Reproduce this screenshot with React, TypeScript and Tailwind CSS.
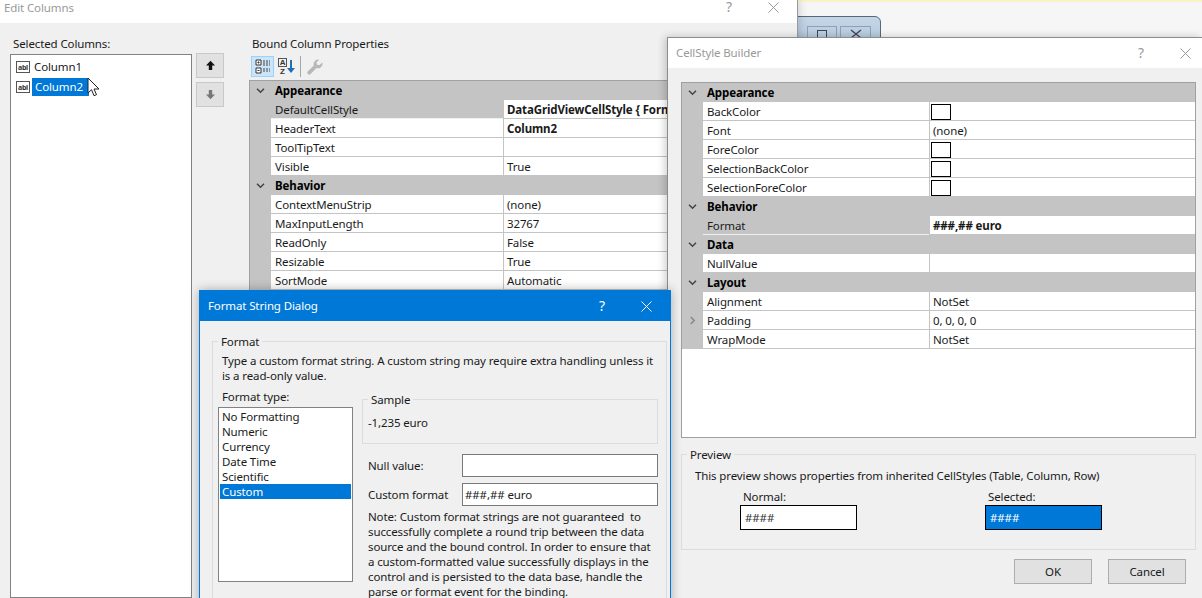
import React from 'react';

type GridRow =
  | { kind: 'cat'; name: string }
  | { kind: 'prop'; name: string; value?: string; bold?: boolean; selected?: boolean; swatch?: boolean; expand?: boolean };

const Row = (kind: 'cat', name: string): GridRow => ({ kind, name });

const columnRows: GridRow[] = [
  Row('cat', 'Appearance'),
  { kind: 'prop', name: 'DefaultCellStyle', value: 'DataGridViewCellStyle { Format=###,## euro }', bold: true, selected: true },
  { kind: 'prop', name: 'HeaderText', value: 'Column2', bold: true },
  { kind: 'prop', name: 'ToolTipText' },
  { kind: 'prop', name: 'Visible', value: 'True' },
  Row('cat', 'Behavior'),
  { kind: 'prop', name: 'ContextMenuStrip', value: '(none)' },
  { kind: 'prop', name: 'MaxInputLength', value: '32767' },
  { kind: 'prop', name: 'ReadOnly', value: 'False' },
  { kind: 'prop', name: 'Resizable', value: 'True' },
  { kind: 'prop', name: 'SortMode', value: 'Automatic' },
];

const styleRows: GridRow[] = [
  Row('cat', 'Appearance'),
  { kind: 'prop', name: 'BackColor', swatch: true },
  { kind: 'prop', name: 'Font', value: '(none)' },
  { kind: 'prop', name: 'ForeColor', swatch: true },
  { kind: 'prop', name: 'SelectionBackColor', swatch: true },
  { kind: 'prop', name: 'SelectionForeColor', swatch: true },
  Row('cat', 'Behavior'),
  { kind: 'prop', name: 'Format', value: '###,## euro', bold: true, selected: true },
  Row('cat', 'Data'),
  { kind: 'prop', name: 'NullValue' },
  Row('cat', 'Layout'),
  { kind: 'prop', name: 'Alignment', value: 'NotSet' },
  { kind: 'prop', name: 'Padding', value: '0, 0, 0, 0', expand: true },
  { kind: 'prop', name: 'WrapMode', value: 'NotSet' },
];

const Chevron = ({ open }: { open: boolean }) => (
  <svg width="9" height="9" viewBox="0 0 9 9" fill="none" stroke={open ? '#444' : '#888'} strokeWidth="1.5">
    {open ? <path d="M1 2.8 4.5 6.2 8 2.8" /> : <path d="M2.8 1 6.2 4.5 2.8 8" />}
  </svg>
);

const PropertyRows = ({ rows, nameClass }: { rows: GridRow[]; nameClass: string }) => (
  <>
    {rows.map((r) =>
      r.kind === 'cat' ? (
        <div key={r.name} className="flex h-[19px] items-center bg-[#c4c4c4] text-black">
          <div className="flex w-[21px] shrink-0 justify-center"><Chevron open /></div>
          <span className="pl-[4px] font-bold leading-none">{r.name}</span>
        </div>
      ) : (
        <div key={r.name} className="flex h-[19px] bg-[#c4c4c4]">
          <div className="flex w-[21px] shrink-0 items-center justify-center">{r.expand && <Chevron open={false} />}</div>
          <div className={`${nameClass} flex shrink-0 items-center border-b pl-[4px] pt-[1px] ${r.selected ? 'border-[#f0f0f0] bg-[#c4c4c4]' : 'border-[#c4c4c4] bg-white'}`}>
            {r.name}
          </div>
          <div className={`flex min-w-0 flex-1 items-center overflow-hidden whitespace-nowrap border-b border-l border-[#c4c4c4] bg-white pl-[3px] pt-[1px] ${r.bold ? 'font-bold' : ''}`}>
            {r.swatch ? <span className="h-[16px] w-[20px] -translate-x-[2px] border border-black bg-white" /> : r.value}
          </div>
        </div>
      ),
    )}
  </>
);

const TitleButtons = ({ color, gap }: { color: string; gap: string }) => (
  <div className={`flex items-center ${gap}`} style={{ color }}>
    <span className="text-[14px] leading-none">?</span>
    <svg width="11" height="11" viewBox="0 0 11 11" stroke="currentColor" strokeWidth="1"><path d="M.5.5l10 10M10.5.5l-10 10" /></svg>
  </div>
);

const AblIcon = () => (
  <span className="flex h-[12px] w-[14px] shrink-0 items-center justify-center border border-[#555] bg-white text-[7px] font-bold leading-none tracking-[-0.3px] text-[#333]">abl</span>
);

const MoveButton = ({ up }: { up?: boolean }) => (
  <div className="flex h-[25px] w-[28px] items-center justify-center border border-[#c8c8c8] bg-[#e1e1e1]">
    <svg width="11" height="11" viewBox="0 0 11 11" fill={up ? '#111' : '#777'}>
      {up ? <path d="M5.5.8 10 5.6H7.2V10H3.8V5.6H1z" /> : <path d="M5.5 10.2 10 5.4H7.2V1H3.8v4.4H1z" />}
    </svg>
  </div>
);

const Legend = ({ text, className }: { text: string; className: string }) => (
  <span className={`absolute -top-[8px] bg-[#f0f0f0] px-[3px] leading-[16px] ${className}`}>{text}</span>
);

const formatTypes = ['No Formatting', 'Numeric', 'Currency', 'Date Time', 'Scientific', 'Custom'];

const noteLines = [
  'Note: Custom format strings are not guaranteed  to',
  'successfully complete a round trip between the data',
  'source and the bound control. In order to ensure that',
  'a custom-formatted value successfully displays in the',
  'control and is persisted to the data base, handle the',
  'parse or format event for the binding.',
];

export default function App() {
  return (
    <div className="relative h-[598px] w-[1202px] overflow-hidden bg-[#f6f6f6] font-['Noto_Sans',sans-serif] text-[11.5px] tracking-[-0.12px] text-[#1a1a1a]">
      {/* desktop behind the dialogs */}
      <div className="h-[2px] bg-[#faf3c8]" />
      <div className="absolute left-[790px] top-[16px] flex h-[22px] w-[91px] items-start justify-end gap-[3px] rounded-tr-[6px] border border-[#56687c] bg-gradient-to-b from-[#c6d6e6] to-[#b6cbe0] pr-[9px] pt-[9px]">
        <div className="flex h-[13px] w-[30px] justify-center border border-[#8ea0b2] pt-[3px]">
          <span className="h-[8px] w-[10px] border border-[#445]" />
        </div>
        <div className="flex h-[13px] w-[31px] justify-center border border-[#8ea0b2] pt-[2px] text-[#445]">
          <svg width="14" height="10" viewBox="0 0 14 10" fill="none" stroke="currentColor" strokeWidth="1.4"><path d="M2 1l10 8M12 1 2 9" /></svg>
        </div>
      </div>

      {/* Edit Columns */}
      <div className="absolute left-0 top-0 flex h-[598px] w-[798px] flex-col border-r border-[#9a9a9a] shadow-[2px_0_8px_rgba(0,0,0,0.15)]">
        <div className="flex h-[23px] shrink-0 items-center justify-between bg-white pl-[4px] pr-[18px] text-[#999]">
          <span className="-mt-[8px]">Edit Columns</span>
          <div className="-mt-[9px]"><TitleButtons color="#999" gap="gap-[36px]" /></div>
        </div>
        <div className="flex flex-1 bg-[#f0f0f0] pl-[10px] pt-[13px]">
          <div className="flex w-[182px] shrink-0 flex-col">
            <div className="h-[16px] pl-[3px] leading-[16px]">Selected Columns:</div>
            <div className="relative mt-[2px] flex-1 border border-[#828282] bg-white pl-[5px] pt-[2px]">
              <div className="flex h-[20px] items-center gap-[4px]"><AblIcon /><span>Column1</span></div>
              <div className="flex h-[20px] items-center gap-[2px]">
                <AblIcon />
                <span className="flex h-[18px] w-[57px] items-center bg-[#0078d7] pl-[3px] text-white">Column2</span>
              </div>
              <svg className="absolute left-[76px] top-[22px]" width="13" height="21" viewBox="0 0 13 21" fill="#fff" stroke="#222" strokeWidth="1">
                <path d="M1 1v15l3.500-3.300 2.500 6 2.500-1-2.500-5.700h5z" />
              </svg>
            </div>
          </div>
          <div className="ml-[4px] mt-[17px] flex w-[28px] shrink-0 flex-col gap-[4px]">
            <MoveButton up />
            <MoveButton />
          </div>
          <div className="ml-[25px] flex flex-1 flex-col pr-[8px]">
            <div className="h-[16px] pl-[3px] leading-[16px]">Bound Column Properties</div>
            <div className="mt-[4px] flex h-[21px] items-center pl-[2px]">
              <div className="flex h-[21px] w-[23px] items-center justify-center border border-[#99d1ff] bg-[#cce4f7]">
                <svg width="16" height="15" viewBox="0 0 16 15">
                  <path d="M1 1h5v5H1zM1 9h5v5H1z" fill="#fff" stroke="#333" />
                  <path d="M2.500 3.500h2M3.500 2.500v2M2.500 11.500h2" stroke="#333" />
                  <path d="M8 2h7M8 4h7M8 6h7M8 10h7M8 12h7" stroke="#444" strokeDasharray="2 1" />
                </svg>
              </div>
              <div className="relative ml-[4px] flex w-[16px] flex-col items-start font-['Liberation_Sans',sans-serif] text-[8px] font-bold leading-[8px] text-[#333]">
                <span className="h-[9px] w-[9px] border border-[#555] text-center leading-[8px]">A</span>
                <span className="w-[9px] text-center leading-[9px]">Z</span>
                <svg className="absolute left-[9px] top-[2px]" width="8" height="13" viewBox="0 0 8 13" fill="#1f6fb5"><path d="M3 0h2v8h3l-4 5-4-5h3z" /></svg>
              </div>
              <span className="ml-[6px] h-[21px] w-px bg-[#a8a8a8]" />
              <svg className="ml-[6px]" width="16" height="16" viewBox="0 0 16 16" fill="#b8b8b8">
                <path d="M11 .6a4.400 4.400 0 0 0-4.200 5.800L.9 12.300a1.900 1.900 0 0 0 2.700 2.700l5.900-5.900A4.400 4.400 0 0 0 15.200 3.500l-2.900 2.800-2.300-.6-.6-2.300L12.200.7A4.400 4.400 0 0 0 11 .6z" />
              </svg>
            </div>
            <div className="mt-[3px] flex-1 border border-[#a0a0a0] bg-white">
              <PropertyRows rows={columnRows} nameClass="w-[232px]" />
            </div>
          </div>
        </div>
      </div>

      {/* CellStyle Builder */}
      <div className="absolute left-[667px] top-[37px] flex h-[561px] w-[535px] flex-col border-l border-t border-[#8c8c8c] shadow-[-2px_0_8px_rgba(0,0,0,0.2)]">
        <div className="flex h-[30px] shrink-0 items-center justify-between bg-white pl-[8px] pr-[11px] text-[#999]">
          <span>CellStyle Builder</span>
          <TitleButtons color="#999" gap="gap-[36px]" />
        </div>
        <div className="flex flex-1 flex-col bg-[#f0f0f0] pl-[13px] pr-[6px] pt-[14px]">
          <div className="h-[356px] border border-[#a0a0a0] bg-white">
            <PropertyRows rows={styleRows} nameClass="w-[226px]" />
          </div>
          <div className="relative mt-[16px] h-[96px] border border-[#dcdcdc] pl-[13px] pt-[13px]">
            <Legend text="Preview" className="left-[5px]" />
            <div className="whitespace-nowrap leading-[16px]">This preview shows properties from inherited CellStyles (Table, Column, Row)</div>
            <div className="ml-[45px] mt-[5px] flex gap-[128px]">
              <div className="w-[117px]">
                <div className="pl-[3px] leading-[16px]">Normal:</div>
                <div className="flex h-[25px] items-center border border-black bg-white pl-[4px] text-[#333]">####</div>
              </div>
              <div className="w-[117px]">
                <div className="pl-[3px] leading-[16px]">Selected:</div>
                <div className="flex h-[25px] items-center border border-black bg-[#0078d7] pl-[4px] text-white">####</div>
              </div>
            </div>
          </div>
          <div className="mt-[9px] flex justify-end gap-[16px] pr-[10px]">
            <div className="flex h-[25px] w-[78px] items-center justify-center border border-[#adadad] bg-[#e1e1e1]">OK</div>
            <div className="flex h-[25px] w-[78px] items-center justify-center border border-[#adadad] bg-[#e1e1e1]">Cancel</div>
          </div>
        </div>
      </div>

      {/* Format String Dialog */}
      <div className="absolute left-[199px] top-[290px] flex h-[320px] w-[472px] flex-col border border-[#0078d7] shadow-[0_0_10px_rgba(0,0,0,0.3)]">
        <div className="flex h-[30px] shrink-0 items-center justify-between bg-[#0078d7] pl-[8px] pr-[18px] text-white">
          <span>Format String Dialog</span>
          <TitleButtons color="#fff" gap="gap-[36px]" />
        </div>
        <div className="flex-1 bg-[#f0f0f0] pl-[12px] pr-[3px] pt-[20px]">
          <div className="relative h-[280px] border border-[#dcdcdc] pl-[9px] pt-[11px]">
            <Legend text="Format" className="left-[5px]" />
            <div className="whitespace-nowrap leading-[15px]">
              <div>Type a custom format string. A custom string may require extra handling unless it</div>
              <div>is a read-only value.</div>
            </div>
            <div className="-ml-[4px] mt-[6px] flex">
              <div className="w-[135px] shrink-0">
                <div className="pl-[4px] leading-[16px]">Format type:</div>
                <div className="mt-[2px] h-[175px] border border-[#828282] bg-white px-[1px] pt-[1px] leading-[15px]">
                  {formatTypes.map((t) => (
                    <div key={t} className={`h-[15px] pl-[2px] ${t === 'Custom' ? 'bg-[#0078d7] text-white' : ''}`}>{t}</div>
                  ))}
                </div>
              </div>
              <div className="ml-[9px] mt-[10px] w-[296px] shrink-0">
                <div className="relative h-[45px] border border-[#dcdcdc] pl-[5px] pt-[15px] leading-[16px]">
                  <Legend text="Sample" className="left-[5px]" />
                  -1,235 euro
                </div>
                <div className="mt-[10px] flex h-[23px] items-center pl-[6px]">
                  <span className="w-[94px]">Null value:</span>
                  <div className="h-[23px] flex-1 border border-[#7a7a7a] bg-white" />
                </div>
                <div className="mt-[6px] flex h-[23px] items-center pl-[6px]">
                  <span className="w-[94px]">Custom format</span>
                  <div className="flex h-[23px] flex-1 items-center border border-[#7a7a7a] bg-white pl-[2px]">###,## euro</div>
                </div>
                <div className="mt-[3px] whitespace-pre pl-[6px] leading-[15px]">
                  {noteLines.map((l) => <div key={l}>{l}</div>)}
                </div>
              </div>
            </div>
          </div>
        </div>
      </div>
    </div>
  );
}
